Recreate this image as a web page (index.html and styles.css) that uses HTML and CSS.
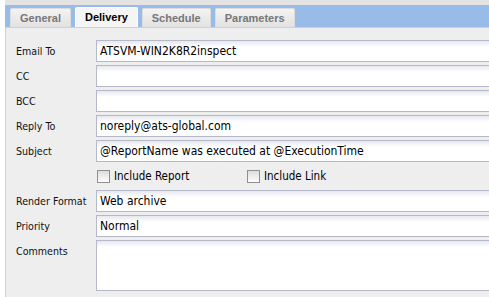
FILE: index.html
```html
<!DOCTYPE html>
<html>
<head>
<meta charset="utf-8">
<link rel="stylesheet" href="styles.css">
</head>
<body>
<div class="panel">
  <div class="strip">
    <div class="tab">General</div>
    <div class="tab active">Delivery</div>
    <div class="tab">Schedule</div>
    <div class="tab">Parameters</div>
  </div>
  <div class="body">
    <div class="form">
      <label class="lbl">Email To</label><div class="field">ATSVM-WIN2K8R2inspect</div>
      <label class="lbl">CC</label><div class="field"></div>
      <label class="lbl">BCC</label><div class="field"></div>
      <label class="lbl">Reply To</label><div class="field">noreply@ats-global.com</div>
      <label class="lbl">Subject</label><div class="field">@ReportName was executed at @ExecutionTime</div>
      <span></span>
      <div class="checks">
        <span class="chk"><span class="box"></span>Include Report</span>
        <span class="chk"><span class="box"></span>Include Link</span>
      </div>
      <label class="lbl">Render Format</label><div class="field">Web archive</div>
      <label class="lbl">Priority</label><div class="field">Normal</div>
      <label class="lbl">Comments</label><div class="field area"></div>
    </div>
  </div>
</div>
</body>
</html>
```
FILE: styles.css
```css
html, body {
  margin: 0;
  padding: 0;
  background: #ffffff;
  overflow: hidden;
}
body {
  font-family: "DejaVu Sans Condensed", "DejaVu Sans", sans-serif;
  font-size: 11px;
  color: #000;
}
.panel {
  margin-left: 5px;
  padding-top: 5px;
  background: #e3e3e3;
  height: 292px;
}
.strip {
  display: flex;
  gap: 4px;
  background: #99bbe8;
  height: 22px;
  padding-left: 5px;
  align-items: flex-end;
  border-bottom: 1px solid #d0d0d0;
}
.tab {
  height: 19px;
  box-sizing: border-box;
  padding: 0 9px;
  line-height: 18px;
  font-family: "Liberation Sans", Arial, sans-serif;
  font-weight: bold;
  font-size: 11px;
  color: #777;
  background: linear-gradient(#f3f3f3, #e2e2e2);
  border: 1px solid #dcdcdc;
  border-bottom: none;
  border-radius: 2px 2px 0 0;
}
.tab.active {
  color: #000;
  background: #f5f5f5;
  border-color: #fff;
  height: 20px;
}
.body {
  background: #eeeeee;
  border-left: 1px solid #d0d0d0;
  height: 268px;
  padding: 12px 0 0 10px;
}
.form {
  display: grid;
  grid-template-columns: 80px 1fr;
  row-gap: 3px;
}
.lbl {
  padding-top: 5px;
  font-size: 10.6px;
  color: #111;
}
.field {
  height: 22px;
  box-sizing: border-box;
  border: 1px solid #b5b8c8;
  border-right: none;
  background: linear-gradient(#e6e8ef, #ffffff 6px);
  padding: 3px 3px 0;
  font-size: 12px;
  white-space: nowrap;
  overflow: hidden;
}
.field.area {
  height: 51px;
}
.checks {
  display: flex;
  height: 22px;
  align-items: center;
}
.chk {
  display: flex;
  align-items: center;
  width: 150px;
  font-size: 11.5px;
}
.box {
  width: 11px;
  height: 11px;
  border: 1px solid #8f8f8f;
  background: linear-gradient(#dcdcdc, #fdfdfd);
  margin: 0 4px 0 1px;
}
```
